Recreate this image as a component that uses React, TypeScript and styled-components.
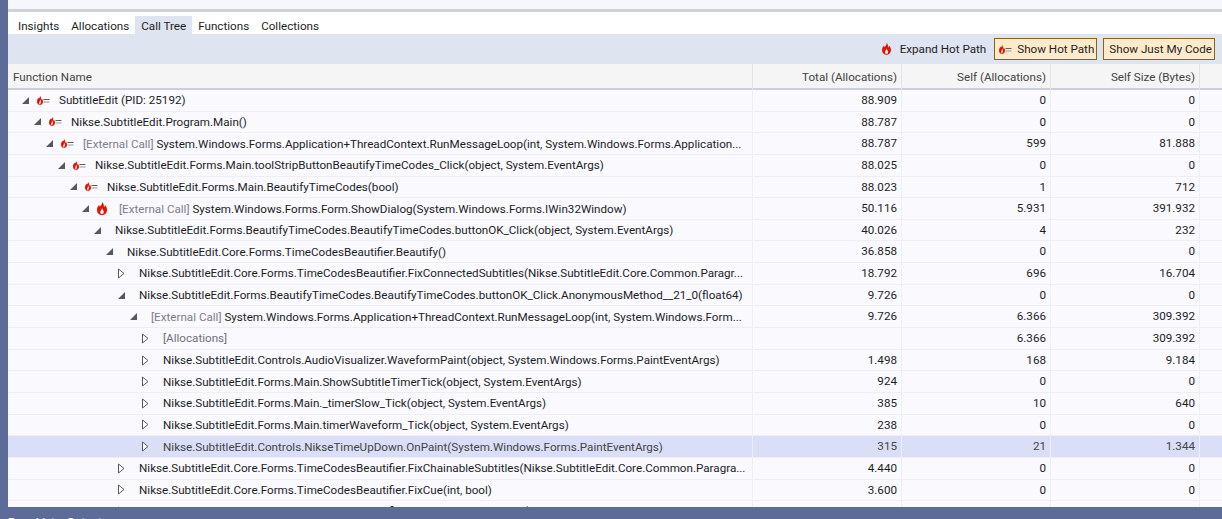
import React from 'react';
import styled, { createGlobalStyle } from 'styled-components';

const GlobalStyle = createGlobalStyle`
  html, body {
    margin: 0;
    padding: 0;
    background: #5d6b99;
    overflow: hidden;
  }
  body {
    font-family: Roboto, "Noto Sans", "Liberation Sans", sans-serif;
    font-size: 11.65px;
    color: #1e1e1e;
  }
`;

const Shell = styled.div`
  width: 1222px;
  height: 519px;
  background: #5d6b99;
  display: flex;
  flex-direction: column;
  overflow: hidden;
`;

const Document = styled.div`
  margin-left: 8px;
  height: 507px;
  flex: none;
  display: flex;
  flex-direction: column;
  overflow: hidden;
  background: #f9f9fe;
`;

const TopBand = styled.div`
  height: 9px;
  flex: none;
  background: #f6f7fd;
  border-bottom: 3px solid #d2d3da;
`;

const TabStrip = styled.div`
  height: 18px;
  flex: none;
  padding-top: 4px;
  background: #fff;
  display: flex;
  padding-left: 4px;
`;

const Tab = styled.div<{ $active?: boolean }>`
  padding: 0 6px;
  line-height: 20px;
  height: 18px;
  background: ${(p) => (p.$active ? '#dfe4f1' : '#fff')};
`;

const Toolbar = styled.div`
  height: 30px;
  flex: none;
  background: #dfe4f1;
  display: flex;
  align-items: center;
  justify-content: flex-end;
  gap: 6px;
  padding-right: 7px;
`;

const ExpandLabel = styled.div`
  display: flex;
  align-items: center;
  gap: 9px;
  margin-right: 2px;
`;

const ToggleButton = styled.div<{ $hasIcon?: boolean }>`
  height: 22px;
  box-sizing: border-box;
  padding: 0 2px 0 ${(p) => (p.$hasIcon ? 4 : 5)}px;
  display: flex;
  align-items: center;
  gap: 5px;
  background: #feebcb;
  border: 1px solid #8a6318;
`;

const Row = styled.div<{ $selected?: boolean }>`
  display: grid;
  grid-template-columns: 745px 149px 149px 149px 1fr;
  height: 21.65px;
  flex: none;
  box-sizing: border-box;
  background: ${(p) => (p.$selected ? '#dadff7' : '#f9f9fe')};
  border-bottom: 1px solid #eeeff5;
`;

const HeaderRow = styled(Row)`
  height: 26px;
  background: #f5f5f5;
  border-bottom: 2px solid #cccedb;
`;

const Cell = styled.div<{ $selected?: boolean }>`
  text-align: right;
  padding-right: 4px;
  line-height: 20px;
  white-space: nowrap;
  border-right: 1px solid #eeeff5;
  color: ${(p) => (p.$selected ? '#444' : 'inherit')};
`;

const HeaderCell = styled.div<{ $left?: boolean }>`
  text-align: ${(p) => (p.$left ? 'left' : 'right')};
  padding: ${(p) => (p.$left ? '0 0 0 5px' : '0 4px 0 0')};
  line-height: 27px;
  color: #444;
  white-space: nowrap;
  border-right: 1px solid #e3e3e8;
`;

const NameCell = styled.div<{ $depth: number }>`
  display: flex;
  align-items: center;
  height: 20.65px;
  padding-left: ${(p) => 13 + p.$depth * 12}px;
  border-right: 1px solid #eeeff5;
  overflow: hidden;
`;

const Arrow = styled.svg`
  width: 9px;
  height: 11px;
  flex: none;
`;

const Glyphs = styled.div`
  width: 13px;
  margin-left: 7px;
  margin-right: -4px;
  flex: none;
  display: flex;
  align-items: center;
`;

const Label = styled.span<{ $muted?: boolean; $selected?: boolean }>`
  margin-left: 13px;
  white-space: nowrap;
  color: ${(p) => (p.$muted ? '#71717a' : p.$selected ? '#444' : 'inherit')};
`;

const External = styled.span`
  color: #7e7e88;
`;

const Footer = styled.div`
  height: 12px;
  flex: none;
  display: flex;
  gap: 12px;
  padding-left: 8px;
  color: #fff;
  line-height: 30px;
  overflow: hidden;
`;

const Flame = ({ size = 9 }: { size?: number }) => (
  <svg width={size} height={size * 1.3} viewBox="0 0 10 13">
    <path
      d="M5 0c.6 2-1 3-2 4.500C2.300 4 2 3.400 2 3 .7 4.500 0 6 0 8c0 3 2.300 5 5 5s5-2 5-5c0-2.500-1-4-2-5 0 1-.3 1.600-1 2C7 3.200 6.500 1 5 0z"
      fill="#e51400"
    />
    <path d="M5 6c.2 1.500-1.700 2.300-1.700 4.200 0 1.100.8 1.800 1.700 1.800s1.700-.7 1.700-1.800C6.700 8.500 5.500 7.500 5 6z" fill="#fff" />
  </svg>
);

const HotPathIcon = () => (
  <svg width="13" height="9" viewBox="0 0 13 9">
    <path d="M3 0c.2 1.200-.6 1.700-1 2.500C1.700 2.200 1.600 1.900 1.600 1.700.6 2.800 0 4.200 0 5.500 0 7.600 1.300 9 3 9s3-1.300 3-3.200C6 4.500 5.500 3.500 4.700 2.800c0 .5-.2.900-.5 1.100C4.300 2.500 3.900.8 3 0z" fill="#e51400" />
    <path d="M3.300 3.600L2 7.500l1 1.200 1-3z" fill="#fff" />
    <path d="M6.500 3.500h6" stroke="#5f5f5f" strokeWidth="1" fill="none" />
    <path d="M6.500 6h6" stroke="#9a9a9a" strokeWidth="1" fill="none" />
  </svg>
);

type Node = {
  depth: number;
  name: string;
  external?: boolean;
  muted?: boolean;
  open?: boolean;
  icon?: 'hot' | 'flame';
  values: [string, string, string];
  selected?: boolean;
};

const rows: Node[] = [
  { depth: 0, open: true, icon: 'hot', name: 'SubtitleEdit (PID: 25192)', values: ['88.909', '0', '0'] },
  { depth: 1, open: true, icon: 'hot', name: 'Nikse.SubtitleEdit.Program.Main()', values: ['88.787', '0', '0'] },
  { depth: 2, open: true, icon: 'hot', external: true, name: 'System.Windows.Forms.Application+ThreadContext.RunMessageLoop(int, System.Windows.Forms.Application...', values: ['88.787', '599', '81.888'] },
  { depth: 3, open: true, icon: 'hot', name: 'Nikse.SubtitleEdit.Forms.Main.toolStripButtonBeautifyTimeCodes_Click(object, System.EventArgs)', values: ['88.025', '0', '0'] },
  { depth: 4, open: true, icon: 'hot', name: 'Nikse.SubtitleEdit.Forms.Main.BeautifyTimeCodes(bool)', values: ['88.023', '1', '712'] },
  { depth: 5, open: true, icon: 'flame', external: true, name: 'System.Windows.Forms.Form.ShowDialog(System.Windows.Forms.IWin32Window)', values: ['50.116', '5.931', '391.932'] },
  { depth: 6, open: true, name: 'Nikse.SubtitleEdit.Forms.BeautifyTimeCodes.BeautifyTimeCodes.buttonOK_Click(object, System.EventArgs)', values: ['40.026', '4', '232'] },
  { depth: 7, open: true, name: 'Nikse.SubtitleEdit.Core.Forms.TimeCodesBeautifier.Beautify()', values: ['36.858', '0', '0'] },
  { depth: 8, name: 'Nikse.SubtitleEdit.Core.Forms.TimeCodesBeautifier.FixConnectedSubtitles(Nikse.SubtitleEdit.Core.Common.Paragr...', values: ['18.792', '696', '16.704'] },
  { depth: 8, open: true, name: 'Nikse.SubtitleEdit.Forms.BeautifyTimeCodes.BeautifyTimeCodes.buttonOK_Click.AnonymousMethod__21_0(float64)', values: ['9.726', '0', '0'] },
  { depth: 9, open: true, external: true, name: 'System.Windows.Forms.Application+ThreadContext.RunMessageLoop(int, System.Windows.Form...', values: ['9.726', '6.366', '309.392'] },
  { depth: 10, muted: true, name: '[Allocations]', values: ['', '6.366', '309.392'] },
  { depth: 10, name: 'Nikse.SubtitleEdit.Controls.AudioVisualizer.WaveformPaint(object, System.Windows.Forms.PaintEventArgs)', values: ['1.498', '168', '9.184'] },
  { depth: 10, name: 'Nikse.SubtitleEdit.Forms.Main.ShowSubtitleTimerTick(object, System.EventArgs)', values: ['924', '0', '0'] },
  { depth: 10, name: 'Nikse.SubtitleEdit.Forms.Main._timerSlow_Tick(object, System.EventArgs)', values: ['385', '10', '640'] },
  { depth: 10, name: 'Nikse.SubtitleEdit.Forms.Main.timerWaveform_Tick(object, System.EventArgs)', values: ['238', '0', '0'] },
  { depth: 10, selected: true, name: 'Nikse.SubtitleEdit.Controls.NikseTimeUpDown.OnPaint(System.Windows.Forms.PaintEventArgs)', values: ['315', '21', '1.344'] },
  { depth: 8, name: 'Nikse.SubtitleEdit.Core.Forms.TimeCodesBeautifier.FixChainableSubtitles(Nikse.SubtitleEdit.Core.Common.Paragra...', values: ['4.440', '0', '0'] },
  { depth: 8, name: 'Nikse.SubtitleEdit.Core.Forms.TimeCodesBeautifier.FixCue(int, bool)', values: ['3.600', '0', '0'] },
  { depth: 8, name: 'Nikse.SubtitleEdit.Core.Forms.TimeCodesBeautifier.FixConnectedSubtitles(Nikse.SubtitleEdit.Core.Common.Paragr...', values: ['', '', ''] },
];

const tabs = ['Insights', 'Allocations', 'Call Tree', 'Functions', 'Collections'];

const App = () => {
  return (
    <Shell>
      <GlobalStyle />
      <Document>
        <TopBand />
        <TabStrip>
          {tabs.map((t) => (
            <Tab key={t} $active={t === 'Call Tree'}>
              {t}
            </Tab>
          ))}
        </TabStrip>
        <Toolbar>
          <ExpandLabel>
            <Flame />
            Expand Hot Path
          </ExpandLabel>
          <ToggleButton $hasIcon>
            <HotPathIcon />
            Show Hot Path
          </ToggleButton>
          <ToggleButton>Show Just My Code</ToggleButton>
        </Toolbar>
        <HeaderRow>
          <HeaderCell $left>Function Name</HeaderCell>
          <HeaderCell>Total (Allocations)</HeaderCell>
          <HeaderCell>Self (Allocations)</HeaderCell>
          <HeaderCell>Self Size (Bytes)</HeaderCell>
        </HeaderRow>
        {rows.map((r, i) => (
          <Row key={i} $selected={r.selected}>
            <NameCell $depth={r.depth}>
              <Arrow viewBox="0 0 9 11">
                {r.open ? (
                  <path d="M8 2v7H1z" fill="#595959" />
                ) : (
                  <path d="M1.500 1l5.500 4.500L1.500 10z" fill="#fff" stroke="#595959" />
                )}
              </Arrow>
              {r.icon && (
                <Glyphs>{r.icon === 'hot' ? <HotPathIcon /> : <Flame size={10} />}</Glyphs>
              )}
              <Label $muted={r.muted} $selected={r.selected}>
                {r.external && <External>[External Call] </External>}
                {r.name}
              </Label>
            </NameCell>
            {r.values.map((v, j) => (
              <Cell key={j} $selected={r.selected}>
                {v}
              </Cell>
            ))}
          </Row>
        ))}
      </Document>
      <Footer>
        <span>Error List</span>
        <span>Output</span>
      </Footer>
    </Shell>
  );
};

export default App;
